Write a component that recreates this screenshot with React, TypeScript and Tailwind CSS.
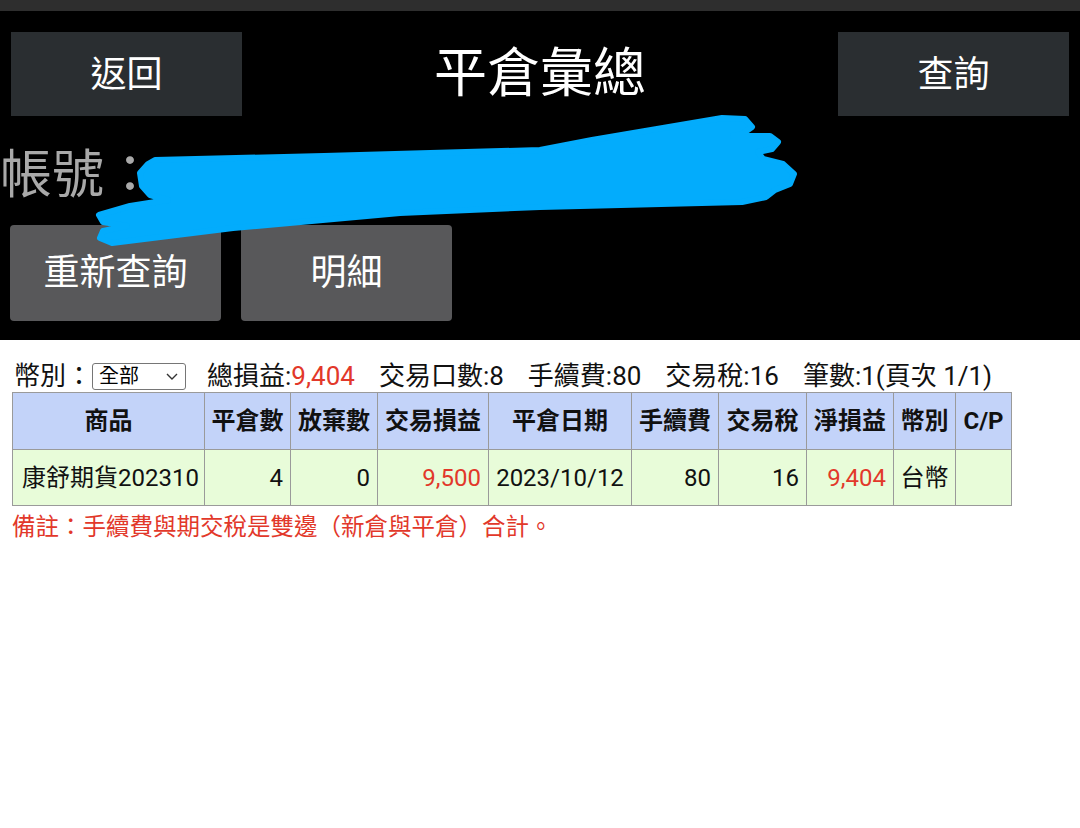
import React from "react";

const FONT = { fontFamily: 'Roboto, "Noto Sans CJK TC", "Noto Sans", sans-serif' };

const cols = [192, 86, 87, 111, 143, 87, 88, 87, 62, 56];
const headers = ["商品", "平倉數", "放棄數", "交易損益", "平倉日期", "手續費", "交易稅", "淨損益", "幣別", "C/P"];

export default function App() {
  return (
    <div className="w-[1080px] h-[828px] bg-white overflow-hidden" style={FONT}>
      <div className="h-[11px] bg-[#2e2e2e]" />
      <div className="relative bg-black h-[329px] flex flex-col">
        <div className="grid grid-cols-[231px_1fr_231px] px-[11px] pt-[21px]">
          <div className="h-[84px] bg-[#2a2e31] flex items-center justify-center text-white text-[36px] pt-[2px]">返回</div>
          <div className="flex items-center justify-center text-white text-[53px] pt-[2px]">平倉彙總</div>
          <div className="h-[84px] bg-[#2a2e31] flex items-center justify-center text-white text-[36px] pt-[2px]">查詢</div>
        </div>
        <div className="h-[109px] flex items-center pt-[10px] text-[#a9a9a9] text-[52px] leading-none">帳號：</div>
        <div className="flex gap-[20px] pl-[10px]">
          <div className="w-[211px] h-[96px] rounded-[4px] bg-[#58585a] flex items-center justify-center text-white text-[36px]">重新查詢</div>
          <div className="w-[211px] h-[96px] rounded-[4px] bg-[#58585a] flex items-center justify-center text-white text-[36px]">明細</div>
        </div>
        <svg className="absolute left-0 top-[-11px]" width="1080" height="340" viewBox="0 0 1080 340">
          <path
            d="M155 160 L324 156 L540 150 L592 140 L722 118 L745 119 L752 127 L742 134 L733 136 L770 136 L778 142 L772 149 L758 152 L763 159 L783 164 L794 174 L790 184 L775 190 L766 197 L742 202 L540 207 L400 213 L233 228 L112 243 L100 238 L103 231 L127 226 L103 222 L99 215 L130 206 L168 200 L150 195 L142 186 L140 173 L148 164 Z"
            fill="#03acfc"
            stroke="#03acfc"
            strokeWidth="6"
            strokeLinejoin="round"
          />
        </svg>
      </div>
      <div className="px-[12px] pt-[20px]">
        <div className="h-[32px] flex items-center pl-[2px] text-[26px] text-[#111] whitespace-nowrap">
          <span>幣別：</span>
          <div className="w-[94px] h-[27px] border border-[#767676] rounded-[3px] bg-white flex items-center justify-between px-[6px] text-[20px] text-black">
            <span>全部</span>
            <svg width="14" height="10" viewBox="0 0 14 10"><path d="M2 3 L7 8 L12 3" fill="none" stroke="#333" strokeWidth="1.4" /></svg>
          </div>
          <span className="ml-[21px]">總損益:<span className="text-[#e2382a]">9,404</span></span>
          <span className="ml-[24px]">交易口數:8</span>
          <span className="ml-[24px]">手續費:80</span>
          <span className="ml-[24px]">交易稅:16</span>
          <span className="ml-[24px]">筆數:1(頁次 1/1)</span>
        </div>
        <table className="table-fixed border-collapse text-[24px] text-[#111]" style={{ width: 999 }}>
          <colgroup>
            {cols.map((w, i) => (
              <col key={i} style={{ width: w }} />
            ))}
          </colgroup>
          <thead>
            <tr className="h-[57px] bg-[#c3d3f9]">
              {headers.map((h) => (
                <th key={h} className="border border-[#9a9a9a] font-bold text-center px-0 whitespace-nowrap">{h}</th>
              ))}
            </tr>
          </thead>
          <tbody>
            <tr className="h-[56px] bg-[#e8fcd9]">
              <td className="border border-[#9a9a9a] pl-[9px] whitespace-nowrap">康舒期貨202310</td>
              <td className="border border-[#9a9a9a] text-right pr-[7px]">4</td>
              <td className="border border-[#9a9a9a] text-right pr-[7px]">0</td>
              <td className="border border-[#9a9a9a] text-right pr-[7px] text-[#e2382a]">9,500</td>
              <td className="border border-[#9a9a9a] text-center whitespace-nowrap">2023/10/12</td>
              <td className="border border-[#9a9a9a] text-right pr-[7px]">80</td>
              <td className="border border-[#9a9a9a] text-right pr-[7px]">16</td>
              <td className="border border-[#9a9a9a] text-right pr-[7px] text-[#e2382a]">9,404</td>
              <td className="border border-[#9a9a9a] text-center">台幣</td>
              <td className="border border-[#9a9a9a]"></td>
            </tr>
          </tbody>
        </table>
        <div className="mt-[4px] text-[23.5px] text-[#e2382a] whitespace-nowrap">備註：手續費與期交稅是雙邊（新倉與平倉）合計。</div>
      </div>
    </div>
  );
}
